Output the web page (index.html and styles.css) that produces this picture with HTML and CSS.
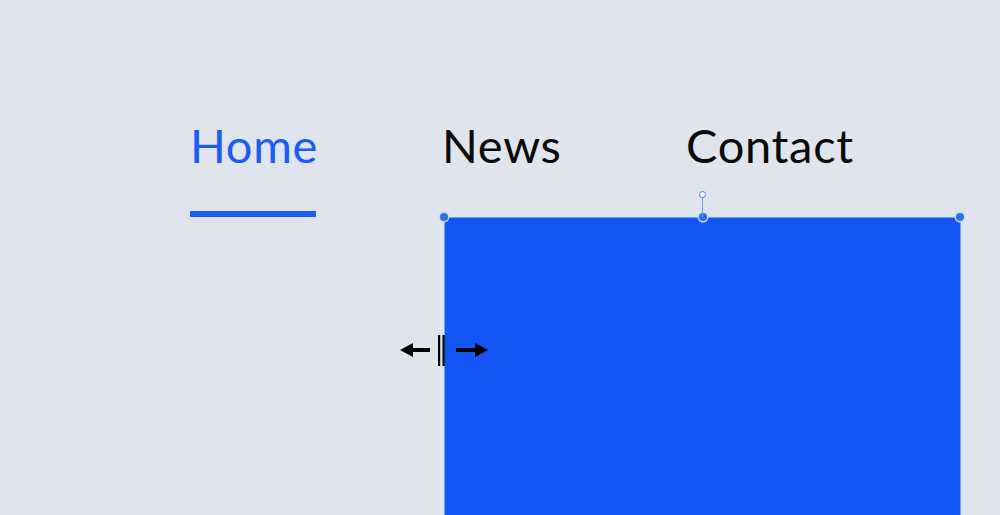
FILE: index.html
```html
<!DOCTYPE html>
<html>
<head>
<meta charset="utf-8">
<link rel="stylesheet" href="styles.css">
</head>
<body>
<div class="canvas">
  <nav class="nav">
    <div class="item active"><span class="label">Home</span><span class="bar"></span></div>
    <div class="item"><span class="label">News</span></div>
    <div class="item"><span class="label">Contact</span></div>
  </nav>
  <div class="shape">
    <span class="handle h-tl"></span>
    <span class="handle h-tm"></span>
    <span class="handle h-tr"></span>
    <span class="rot-line"></span>
    <span class="rot"></span>
  </div>
  <svg class="cursor" width="92" height="34" viewBox="0 0 92 34">
    <path d="M2 16 L15 9 L15 14 L32 14 L32 18 L15 18 L15 23 Z" fill="#000"/>
    <rect x="40" y="1" width="2.2" height="31" fill="#000"/>
    <rect x="44.5" y="1" width="2.2" height="31" fill="#000"/>
    <path d="M90 16 L77 9 L77 14 L58 14 L58 18 L77 18 L77 23 Z" fill="#000"/>
  </svg>
</div>
</body>
</html>
```
FILE: styles.css
```css
html, body {
  margin: 0;
  padding: 0;
}
body {
  background: #e0e4ed;
  width: 1000px;
  height: 515px;
  overflow: hidden;
  font-family: Lato, "Noto Sans", sans-serif;
}
.canvas {
  position: relative;
  width: 1000px;
  height: 515px;
}
.nav {
  display: grid;
  grid-template-columns: 252px 244px auto;
  padding: 115px 0 0 190px;
  justify-items: start;
  align-items: start;
}
.item {
  display: flex;
  flex-direction: column;
  align-items: stretch;
}
.label {
  font-size: 47px;
  line-height: 60px;
  color: #0a0a0a;
  letter-spacing: 0.7px;
}
.active .label {
  color: #1a5cf4;
}
.bar {
  display: block;
  width: 126px;
  height: 6px;
  margin-top: 36px;
  background: #1a5cf4;
}
.shape {
  position: absolute;
  left: 444px;
  top: 217px;
  width: 515px;
  height: 320px;
  background: #1456f5;
  border: 1px solid #6ea2f6;
  box-sizing: content-box;
}
.handle {
  position: absolute;
  width: 8px;
  height: 8px;
  border-radius: 50%;
  background: #2c72e6;
  box-shadow: 0 0 0 1.5px #c9daf7;
  top: -5px;
}
.h-tl { left: -5px; }
.h-tm { left: 253.5px; }
.h-tr { left: 511px; }
.rot-line {
  position: absolute;
  left: 257px;
  top: -21px;
  width: 1px;
  height: 20px;
  background: #6ea2f6;
}
.rot {
  position: absolute;
  left: 253.5px;
  top: -27.5px;
  width: 5px;
  height: 5px;
  border-radius: 50%;
  background: #ffffff;
  border: 1.5px solid #3f82ea;
}
.cursor {
  position: absolute;
  left: 398px;
  top: 334px;
}
```
